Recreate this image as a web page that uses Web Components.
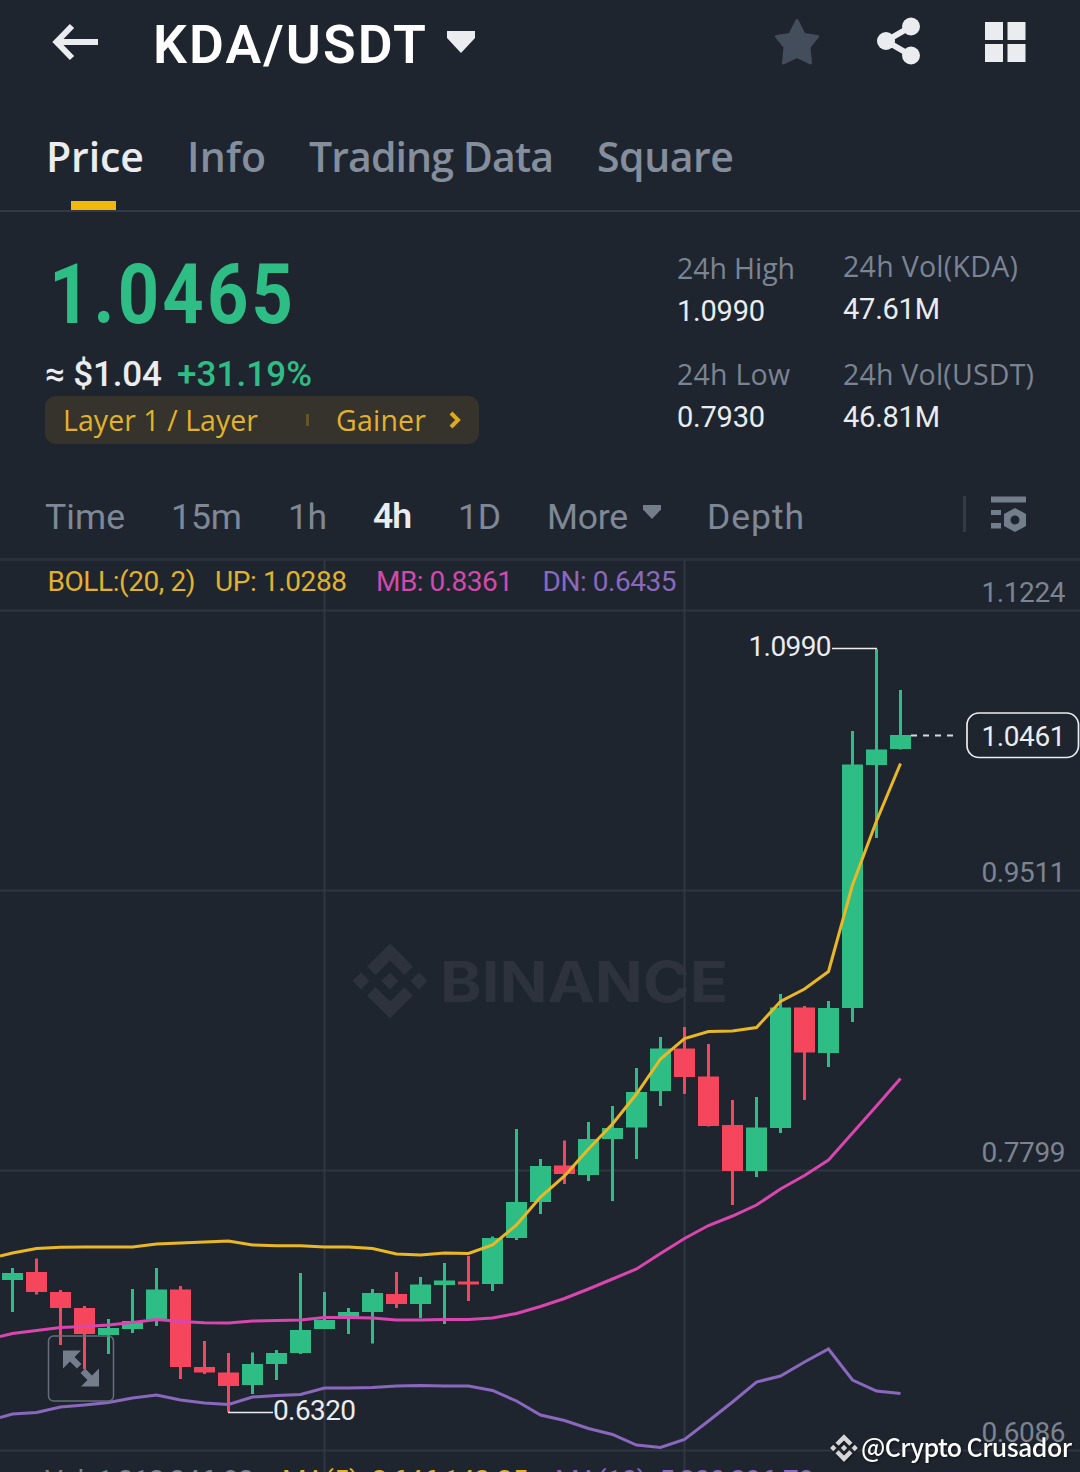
<!DOCTYPE html>
<html lang="en">
<head>
<meta charset="utf-8">
<title>KDA/USDT</title>
<style>
  body {
    margin: 0;
    width: 1080px;
    height: 1472px;
    overflow: hidden;
    background: #1f252f;
    color: #eaecef;
    font-family: Roboto, "Noto Sans", sans-serif;
    --label-font: "Open Sans", "Noto Sans", sans-serif;
  }
</style>
</head>
<body>
<trading-app></trading-app>

<script>
// <fit-text width="98">Price</fit-text> spreads its letters over a fixed width
// squeeze="0.85" narrows the glyphs first
class FitText extends HTMLElement {
  constructor() {
    super();
    this.attachShadow({ mode: "open" });
    this.shadowRoot.innerHTML = `
      <style>
        :host { display: block; white-space: nowrap; flex: none; }
        span { display: inline-block; transform-origin: left; }
      </style>
      <span><slot></slot></span>
    `;
  }

  connectedCallback() {
    const width = Number(this.getAttribute("width"));
    const squeeze = Number(this.getAttribute("squeeze") || 1);
    const span = this.shadowRoot.querySelector("span");
    const slot = this.shadowRoot.querySelector("slot");
    const text = slot.assignedNodes({ flatten: true }).map((node) => node.textContent).join("");
    this.style.width = width + "px";
    const natural = span.getBoundingClientRect().width;
    const gaps = text.length - 1;
    if (gaps > 0) {
      span.style.letterSpacing = (width / squeeze - natural) / gaps + "px";
    }
    if (squeeze !== 1) {
      span.style.transform = `scaleX(${squeeze})`;
    }
  }
}

class AppHeader extends HTMLElement {
  constructor() {
    super();
    this.attachShadow({ mode: "open" });
    this.shadowRoot.innerHTML = `
      <style>
        :host { display: flex; align-items: center; height: 88px; padding: 0 54px 0 52px; box-sizing: border-box; }
        fit-text { height: 88px; margin-left: 55px; font-size: 53.5px; line-height: 90px; font-weight: 600; color: #fff; }
        svg { display: block; flex: none; overflow: visible; margin-bottom: 4px; }
        .caret { margin-left: 21px; }
        .actions { display: flex; align-items: center; margin-left: auto; }
        .share { margin: 0 63px 6px 54px; }
      </style>
      <svg width="46" height="36" viewBox="0 0 46 36" fill="none" stroke="#eaecef" stroke-width="6">
        <path d="M20 2 4.500 18 20 34M4.500 18H46"/>
      </svg>
      <fit-text width="273"><slot></slot></fit-text>
      <svg class="caret" width="28" height="22" viewBox="0 0 28 22"><path fill="#eaecef" d="M0 0H28V7L14 22 0 7Z"/></svg>
      <div class="actions">
        <svg width="46" height="46" viewBox="0 0 46 46">
          <path fill="#444d5b" stroke="#444d5b" stroke-width="3" stroke-linejoin="round" d="M23 1.5 30 15.5 43.500 17.5 35 28 36.5 44 23 37.5 9.500 44 11 28 2.500 17.500 16 15.500Z"/>
        </svg>
        <svg class="share" width="48" height="48" viewBox="0 0 48 48" fill="#eaecef">
          <path d="M12 24 37 9.500M12 24 37 38.500" stroke="#eaecef" stroke-width="6"/>
          <circle cx="12" cy="24" r="9"/><circle cx="37" cy="9.500" r="9"/><circle cx="37" cy="38.500" r="9"/>
        </svg>
        <svg width="41" height="40" viewBox="0 0 41 40" fill="#eaecef">
          <path d="M0 0H18V18H0ZM22.500 0H40.500V18H22.500ZM0 22H18V40H0ZM22.500 22H40.500V40H22.500Z"/>
        </svg>
      </div>
    `;
  }
}

class TabItem extends HTMLElement {
  constructor() {
    super();
    this.attachShadow({ mode: "open" });
    this.shadowRoot.innerHTML = `
      <style>
        :host { display: flex; flex-direction: column; align-items: center; justify-content: space-between; color: #848e9c; }
        :host([active]) { color: #eaecef; }
        .bar { width: 45px; height: 9px; margin-right: 4px; }
        :host([active]) .bar { background: #f0b90b; }
      </style>
      <slot></slot>
      <div class="bar"></div>
    `;
  }
}

class TabBar extends HTMLElement {
  constructor() {
    super();
    this.attachShadow({ mode: "open" });
    this.shadowRoot.innerHTML = `
      <style>
        :host {
          display: flex; gap: 43px; height: 124px; box-sizing: border-box;
          padding: 43px 0 0 46px; border-bottom: 2px solid #333a46;
          font-family: var(--label-font); font-size: 41px; line-height: 50px; font-weight: 600;
        }
      </style>
      <slot></slot>
    `;
  }
}

// label over value, used for the 24h figures
class StatItem extends HTMLElement {
  constructor() {
    super();
    this.attachShadow({ mode: "open" });
    this.shadowRoot.innerHTML = `
      <style>
        :host { display: block; font-size: 29px; line-height: 42px; color: #eaecef; }
        .label { height: 42px; line-height: 41px; font-family: var(--label-font); font-size: 28.5px; color: #7b8492; }
      </style>
      <div class="label"><slot name="label"></slot></div>
      <slot></slot>
    `;
  }
}

class PriceSummary extends HTMLElement {
  constructor() {
    super();
    this.attachShadow({ mode: "open" });
    this.shadowRoot.innerHTML = `
      <style>
        :host { display: flex; height: 258px; padding: 34px 0 0 45px; box-sizing: border-box; }
        .main { width: 632px; }
        .price { height: 94px; margin-left: 4px; font-size: 83px; line-height: 97px; font-weight: 700; color: #2ebd85; }
        .sub { display: flex; gap: 15px; padding-top: 12px; height: 44px; font-size: 35px; line-height: 46px; font-weight: 500; }
        .change { color: #2ebd85; }
        .tags {
          display: flex; align-items: center; width: 434px; height: 48px; box-sizing: border-box;
          padding-left: 18px; border-radius: 11px; background: #35332b;
          font-family: var(--label-font); font-size: 28.5px; line-height: 48px; color: #e2b22c;
        }
        .sep { width: 3px; height: 12px; margin: 0 27px 0 48px; background: #635329; }
        svg { margin-left: 23px; }
        .col { display: flex; flex-direction: column; gap: 22px; width: 166px; padding-top: 2px; }
        .col + .col { gap: 24px; padding-top: 0; }
      </style>
      <div class="main">
        <fit-text class="price" width="244" squeeze="0.87">1.0465</fit-text>
        <div class="sub">
          <fit-text width="117">≈ $1.04</fit-text>
          <fit-text class="change" width="135">+31.19%</fit-text>
        </div>
        <div class="tags">
          <fit-text width="195">Layer 1 / Layer</fit-text>
          <div class="sep"></div>
          <fit-text width="90">Gainer</fit-text>
          <svg width="12" height="18" viewBox="0 0 12 18" fill="none" stroke="#dfa920" stroke-width="4"><path d="M2 2 9 9 2 16"/></svg>
        </div>
      </div>
      <div class="col">
        <stat-item><fit-text slot="label" width="118">24h High</fit-text><fit-text width="88">1.0990</fit-text></stat-item>
        <stat-item><fit-text slot="label" width="113">24h Low</fit-text><fit-text width="88">0.7930</fit-text></stat-item>
      </div>
      <div class="col">
        <stat-item><fit-text slot="label" width="175">24h Vol(KDA)</fit-text><fit-text width="97">47.61M</fit-text></stat-item>
        <stat-item><fit-text slot="label" width="191">24h Vol(USDT)</fit-text><fit-text width="97">46.81M</fit-text></stat-item>
      </div>
    `;
  }
}

class IntervalBar extends HTMLElement {
  constructor() {
    super();
    this.attachShadow({ mode: "open" });
    this.shadowRoot.innerHTML = `
      <style>
        :host {
          display: flex; align-items: center; gap: 46px; height: 91px; box-sizing: border-box;
          padding: 5px 53px 0 45px; border-bottom: 3px solid #2a303b;
          font-size: 35.5px; line-height: 50px; color: #7f8896;
        }
        .active { color: #eaecef; font-weight: 600; margin-bottom: 2px; }
        .more { display: flex; gap: 15px; align-items: center; }
        .more svg { margin-bottom: 9px; }
        .tools { display: flex; gap: 25px; margin-left: auto; margin-bottom: 6px; }
        .rule { width: 3px; height: 36px; background: #333a46; }
      </style>
      <fit-text width="80">Time</fit-text>
      <fit-text width="71">15m</fit-text>
      <fit-text width="39">1h</fit-text>
      <fit-text class="active" width="39">4h</fit-text>
      <fit-text width="43">1D</fit-text>
      <div class="more">
        <fit-text width="81">More</fit-text>
        <svg width="18" height="14" viewBox="0 0 18 14"><path fill="#747d8c" d="M0 0H18V4.500L9 14 0 4.500Z"/></svg>
      </div>
      <fit-text width="97">Depth</fit-text>
      <div class="tools">
        <div class="rule"></div>
        <svg width="36" height="36" viewBox="0 0 36 36" fill="#747d8c">
          <path d="M0 .5H35V6.500H0ZM0 14H10V19H0ZM0 27H10V32.500H0Z"/>
          <path fill-rule="evenodd" d="M24 12 35 18V30L24 36 13 30V18ZM24 19.500A4.500 4.500 0 1 0 24 28.500 4.500 4.500 0 0 0 24 19.500Z"/>
        </svg>
      </div>
    `;
  }
}

// one row per 4h candle: direction, high, low, body top, body bottom (all y in page px)
const candles = [
  ["up", 1268, 1312, 1273, 1280],
  ["down", 1258.5, 1294.5, 1272, 1292],
  ["down", 1290, 1345, 1292, 1308],
  ["down", 1306, 1369, 1308, 1334],
  ["up", 1319, 1354, 1328, 1335],
  ["up", 1289, 1333, 1321, 1329],
  ["up", 1268, 1326, 1289.5, 1319.5],
  ["down", 1286, 1379, 1289.5, 1367],
  ["down", 1341, 1374, 1367, 1372.5],
  ["down", 1353, 1412, 1372.5, 1386],
  ["up", 1352.5, 1394, 1364, 1385],
  ["up", 1350, 1380, 1353, 1364],
  ["up", 1273, 1354, 1330, 1353],
  ["up", 1292, 1329, 1320, 1329],
  ["up", 1308, 1334, 1312, 1319],
  ["up", 1289, 1343.5, 1293, 1312],
  ["down", 1272, 1308, 1294, 1304],
  ["up", 1277, 1318, 1284.5, 1304],
  ["up", 1263, 1324, 1280.5, 1285],
  ["down", 1256, 1301, 1281.5, 1284.5],
  ["up", 1236.5, 1291, 1238, 1284],
  ["up", 1129, 1240, 1202, 1238],
  ["up", 1159, 1214, 1166, 1202],
  ["down", 1140.5, 1184, 1165.5, 1174],
  ["up", 1122, 1181, 1139, 1175],
  ["up", 1106, 1201, 1128, 1139],
  ["up", 1068, 1159, 1092, 1127.5],
  ["up", 1037, 1106, 1048.5, 1091],
  ["down", 1027, 1094, 1048.5, 1077],
  ["down", 1044, 1126.5, 1076.5, 1126],
  ["down", 1100, 1205, 1125, 1171],
  ["up", 1097, 1177, 1127.5, 1171],
  ["up", 994, 1133, 1007.5, 1128],
  ["down", 1006, 1100, 1007.5, 1052.5],
  ["up", 1001, 1067, 1008, 1053],
  ["up", 731, 1022, 764.5, 1008],
  ["up", 649, 838, 749.5, 765],
  ["up", 690, 749.5, 735, 749],
];

// bollinger bands, first value is at the left edge, then one per candle
const bands = {
  "#e9b824": [1256, 1253, 1248.5, 1247.3, 1247, 1247, 1247, 1244, 1243, 1242, 1241, 1245, 1245.7, 1245.7, 1247, 1247, 1248.5, 1254, 1255, 1253, 1253.5, 1245, 1225, 1197, 1176, 1149, 1124, 1094, 1059, 1038.5, 1031.5, 1031, 1027.5, 1001.5, 989, 971.5, 885, 821, 763.5],
  "#d946b0": [1336.5, 1333.5, 1330.5, 1327.5, 1326.5, 1325, 1322.5, 1319.5, 1321.5, 1322.7, 1323, 1321, 1320.5, 1320, 1317.5, 1317.5, 1318, 1320, 1320, 1319.5, 1319.5, 1318, 1313.5, 1306.5, 1298.5, 1289, 1279, 1269, 1253.5, 1238.5, 1225.5, 1216, 1205, 1189, 1175.5, 1160, 1133, 1106, 1078.5],
  "#8a68bd": [1417.5, 1414, 1412.5, 1407, 1405, 1402.5, 1398, 1395, 1400, 1403, 1404.5, 1397, 1395.5, 1394.5, 1388, 1388, 1387.5, 1386, 1385.5, 1386, 1386, 1390.5, 1401, 1415, 1420.5, 1428.5, 1434.5, 1445, 1447.5, 1439.5, 1421, 1402, 1382, 1376, 1362, 1349, 1380, 1391, 1393.5],
};

const STEP = 24;
const FIRST_X = 12.5;

const logoPath = "M0-37.500 23-14.500 14.500-6 0-20.500-14.500-6-23-14.500ZM0 37.500 23 14.500 14.500 6 0 20.500-14.500 6-23 14.500ZM0-8.500 8.500 0 0 8.500-8.500 0ZM-29-8.500-20.500 0-29 8.500-37.500 0ZM29-8.500 37.500 0 29 8.500 20.500 0Z";

class CandleChart extends HTMLElement {
  constructor() {
    super();
    this.attachShadow({ mode: "open" });
  }

  connectedCallback() {
    this.shadowRoot.innerHTML = `
      <style>
        :host { display: block; height: 911px; }
        svg { display: block; }
        text { font-size: 28px; }
        .up { fill: #2ebd85; }
        .down { fill: #f6465d; }
        .axis { fill: #7c8491; }
        .mark { fill: #eaecef; }
        .brand { font: 700 56px Inter, sans-serif; }
        .user { font: 500 25px "Noto Sans CJK SC", sans-serif; fill: #fff; }
      </style>
      <svg width="1080" height="911" viewBox="0 561 1080 911">
        <g fill="#2d323d">
          <path transform="translate(390 981)" d="${logoPath}"/>
          <text class="brand" x="440" y="1001.500" textLength="288" lengthAdjust="spacingAndGlyphs">BINANCE</text>
        </g>
        <path stroke="#303742" stroke-width="2" d="M0 610.500H1080M0 890.500H1080M0 1170.500H1080M0 1450.500H1080M324.500 561V1472M684.500 561V1472"/>
        ${this.renderCandles()}
        ${this.renderBands()}
        ${this.renderLegend()}
        ${this.renderAxis()}
        ${this.renderMarks()}
        ${this.renderExpand()}
        <g filter="drop-shadow(1px 1px 1px #0008)">
          <path fill="#d6d6d6" transform="translate(844 1448) scale(.37)" d="${logoPath}"/>
          <text class="user" x="861" y="1457" textLength="211">@Crypto Crusador</text>
        </g>
      </svg>
    `;
  }

  renderCandles() {
    return candles.map(([dir, high, low, top, bottom], i) => {
      const x = FIRST_X + i * STEP;
      return `<g class="${dir}">
        <rect x="${x - 1.5}" y="${high}" width="3" height="${low - high}"/>
        <rect x="${x - 10.5}" y="${top}" width="21" height="${bottom - top}"/>
      </g>`;
    }).join("");
  }

  renderBands() {
    return Object.entries(bands).map(([color, values]) => {
      const points = values.map((y, i) => `${i === 0 ? 0 : FIRST_X + (i - 1) * STEP},${y}`);
      return `<polyline fill="none" stroke="${color}" stroke-width="3" points="${points.join(" ")}"/>`;
    }).join("");
  }

  renderLegend() {
    return `
      <text x="47.500" y="591" textLength="148" fill="#e2b22c">BOLL:(20, 2)</text>
      <text x="215" y="591" textLength="132" fill="#e2b22c">UP: 1.0288</text>
      <text x="376" y="591" textLength="137" fill="#d04aae">MB: 0.8361</text>
      <text x="542.500" y="591" textLength="134" fill="#8a68bd">DN: 0.6435</text>
      <text x="45" y="1490" textLength="209" class="axis">Vol: 1,313,346.83</text>
      <text x="282" y="1490" textLength="246" fill="#e2b22c">MA(5): 2,646,143.35</text>
      <text x="555" y="1490" textLength="259" fill="#8a68bd">MA(10): 5,200,396.78</text>
    `;
  }

  renderAxis() {
    const labels = ["1.1224", "0.9511", "0.7799", "0.6086"];
    return labels.map((label, i) =>
      `<text class="axis" x="981.500" y="${602 + i * 280}" textLength="84">${label}</text>`
    ).join("");
  }

  renderMarks() {
    return `
      <path fill="none" stroke="#eaecef" stroke-width="1.600" d="M832 648.500H877M228 1412.500H273"/>
      <path fill="none" stroke="#d5d8dc" stroke-width="1.800" stroke-dasharray="6 6" d="M911 735.500H954"/>
      <text class="mark" x="748.500" y="656" textLength="83">1.0990</text>
      <text class="mark" x="273" y="1420" textLength="83">0.6320</text>
      <rect x="967" y="713" width="111.500" height="44.500" rx="12" fill="#1f252f" stroke="#eaecef" stroke-width="1.700"/>
      <text class="mark" x="981.500" y="746" textLength="84">1.0461</text>
    `;
  }

  renderExpand() {
    return `
      <rect x="48.500" y="1336" width="65" height="65" rx="5" fill="none" stroke="#666e7b" stroke-width="1.500"/>
      <path fill="#747d8c" d="M63 1350.500H81L74.500 1357 81.500 1364 77 1368.500 70 1361.500 63 1368.500ZM99 1368.500V1386.500H81L87.500 1380 80.500 1373 85 1368.500 92 1375.500Z"/>
    `;
  }
}

class TradingApp extends HTMLElement {
  constructor() {
    super();
    this.attachShadow({ mode: "open" });
    this.shadowRoot.innerHTML = `
      <style>
        :host { display: flex; flex-direction: column; width: 1080px; height: 1472px; overflow: hidden; }
      </style>
      <app-header>KDA/USDT</app-header>
      <tab-bar>
        <tab-item active><fit-text width="98">Price</fit-text></tab-item>
        <tab-item><fit-text width="79">Info</fit-text></tab-item>
        <tab-item><fit-text width="245">Trading Data</fit-text></tab-item>
        <tab-item><fit-text width="137">Square</fit-text></tab-item>
      </tab-bar>
      <price-summary></price-summary>
      <interval-bar></interval-bar>
      <candle-chart></candle-chart>
    `;
  }
}

window.customElements.define("app-header", AppHeader);
window.customElements.define("tab-item", TabItem);
window.customElements.define("tab-bar", TabBar);
window.customElements.define("stat-item", StatItem);
window.customElements.define("price-summary", PriceSummary);
window.customElements.define("interval-bar", IntervalBar);
window.customElements.define("candle-chart", CandleChart);
window.customElements.define("trading-app", TradingApp);
// last, so the styles around each text are in place when it is measured
window.customElements.define("fit-text", FitText);
</script>
</body>
</html>
